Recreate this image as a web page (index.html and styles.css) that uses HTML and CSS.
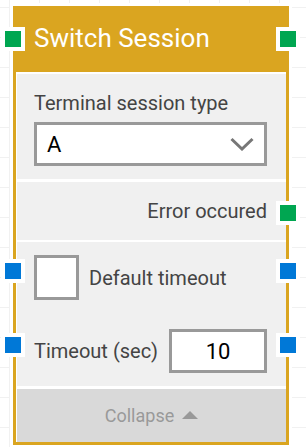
FILE: index.html
```html
<!DOCTYPE html>
<html lang="en">
<head>
    <meta charset="UTF-8">
    <meta name="viewport" content="width=device-width, initial-scale=1.0">
    <title>Switch Session</title>
    <link rel="stylesheet" href="styles.css">
</head>
<body>
    <div class="node">
        <div class="node-header">Switch Session</div>

        <div class="section">
            <label class="field-label" for="sessionType">Terminal session type</label>
            <div class="select">
                <span>A</span>
                <svg width="24" height="14" viewBox="0 0 24 14">
                    <polyline points="1.5,2 12,12 22.5,2" fill="none" stroke="#777" stroke-width="3"/>
                </svg>
            </div>
        </div>

        <div class="section section-error">
            <span class="field-label">Error occured</span>
        </div>

        <div class="section section-timeout">
            <div class="row">
                <span class="checkbox"></span>
                <span class="field-label">Default timeout</span>
            </div>
            <div class="row timeout-row">
                <span class="field-label">Timeout (sec)</span>
                <span class="number-input">10</span>
            </div>
        </div>

        <div class="collapse">Collapse <span class="arrow-up"></span></div>

        <!-- connection ports sit over the node edges -->
        <span class="port port-left port-green" style="top: 18px"></span>
        <span class="port port-right port-green" style="top: 18px"></span>
        <span class="port port-right port-green" style="top: 192px"></span>
        <span class="port port-left port-blue" style="top: 250px"></span>
        <span class="port port-right port-blue" style="top: 250px"></span>
        <span class="port port-left port-blue" style="top: 324px"></span>
        <span class="port port-right port-blue" style="top: 324px"></span>
    </div>
</body>
</html>
```

FILE: styles.css
```css
body {
    margin: 0;
    font-family: Roboto, "Liberation Sans", sans-serif;
    background-color: #fff;
    background-image:
        linear-gradient(to right, #f1f1f1 1px, transparent 1px),
        linear-gradient(to bottom, #f1f1f1 1px, transparent 1px);
    background-size: 30px 30px;
    background-position: 9px 7px;
    height: 447px;
    overflow: hidden;
}
.node {
    position: relative;
    width: 270px;
    margin: 6px 0 0 13px;
    border: 3px solid #daa520;
    background-color: #fff;
    box-shadow: 0 0 0 3px #fff;
    display: flex;
    flex-direction: column;
    gap: 2px;
}
.node-header {
    height: 58px;
    padding: 0 0 5px 18px;
    display: flex;
    align-items: center;
    background-color: #daa520;
    color: #fff;
    font-size: 26px;
    line-height: 30px;
}
.section {
    margin: 0 0 0 1px;
    padding: 17px 19px 13px 17px;
    background-color: #f0f0f0;
}
.field-label {
    display: block;
    font-size: 20px;
    line-height: 24px;
    color: #444;
}
.select {
    margin-top: 7px;
    height: 38px;
    padding: 0 10px 0 10px;
    border: 3px solid #999;
    background-color: #fff;
    display: flex;
    align-items: center;
    justify-content: space-between;
    font-size: 22px;
    color: #000;
}
.section-error {
    height: 58px;
    padding-top: 0;
    padding-bottom: 0;
    margin-top: 1px;
    display: flex;
    align-items: center;
    justify-content: flex-end;
}
.section-timeout {
    padding-top: 13px;
    display: flex;
    flex-direction: column;
    gap: 29px;
}
.row {
    display: flex;
    align-items: center;
}
.checkbox {
    width: 39px;
    height: 39px;
    border: 3px solid #999;
    background-color: #fff;
    margin-right: 10px;
}
.timeout-row {
    justify-content: space-between;
}
.number-input {
    width: 92px;
    height: 38px;
    border: 3px solid #999;
    background-color: #fff;
    display: flex;
    align-items: center;
    justify-content: center;
    font-size: 22px;
    color: #000;
}
.collapse {
    margin: 1px 0 0 1px;
    height: 53px;
    display: flex;
    align-items: center;
    justify-content: center;
    gap: 8px;
    background-color: #d9d9d9;
    color: #999;
    font-size: 18px;
}
.arrow-up {
    width: 0;
    height: 0;
    border-left: 8.5px solid transparent;
    border-right: 8.5px solid transparent;
    border-bottom: 8px solid #999;
    margin-top: -2px;
}
.port {
    position: absolute;
    width: 16px;
    height: 16px;
    border: 4px solid #fff;
}
.port-left {
    left: -15px;
}
.port-right {
    right: -14px;
}
.port-green {
    background-color: #00a651;
}
.port-blue {
    background-color: #0078d7;
}
```
